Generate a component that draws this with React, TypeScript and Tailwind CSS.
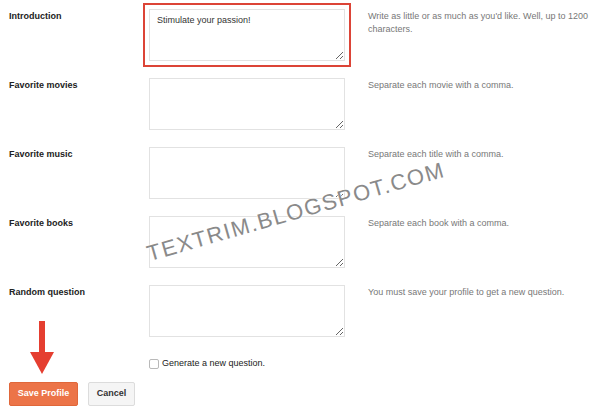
import React from "react";

const rows = [
  { label: "Introduction", help: "Write as little or as much as you'd like. Well, up to 1200 characters.", value: "Stimulate your passion!", highlight: true },
  { label: "Favorite movies", help: "Separate each movie with a comma." },
  { label: "Favorite music", help: "Separate each title with a comma." },
  { label: "Favorite books", help: "Separate each book with a comma." },
  { label: "Random question", help: "You must save your profile to get a new question." },
];

export default function App() {
  return (
    <div className="relative h-[417px] w-[600px] overflow-hidden bg-white font-['Liberation_Sans',Arial,sans-serif] text-[9px]">
      <div className="flex flex-col gap-[17px] pl-[9px] pt-[9px]">
        {rows.map((r) => (
          <div key={r.label} className="flex">
            <div className="w-[140px] pt-[1px] font-bold leading-[13px] text-[#222]">{r.label}</div>
            <textarea
              defaultValue={r.value}
              className={
                "h-[52px] w-[196px] resize-y border border-[#e2e2e2] bg-white px-[7px] py-[4px] leading-[13px] text-[#333] " +
                (r.highlight ? "outline-2 outline-offset-[4px] outline-[#dc4437]" : "outline-none")
              }
            />
            <div className="ml-[23px] w-[226px] pt-[1px] leading-[13px] text-[#777]">{r.help}</div>
          </div>
        ))}
      </div>

      <div className="mt-[20px] flex items-center pl-[149px]">
        <span className="h-[10px] w-[10px] rounded-[2px] border border-[#b9b9b9] bg-white" />
        <span className="ml-[3px] leading-[13px] text-[#222]">Generate a new question.</span>
      </div>

      <div className="mt-[12px] flex gap-[10px] pl-[9px]">
        <button className="h-[24px] w-[69px] rounded-[2px] border border-[#e0673a] bg-[#ec7448] font-bold text-white">
          Save Profile
        </button>
        <button className="h-[24px] w-[47px] rounded-[2px] border border-[#dcdcdc] bg-[#f5f5f5] font-bold text-[#333]">
          Cancel
        </button>
      </div>

      <svg className="absolute left-[30px] top-[321px]" width="24" height="53" viewBox="0 0 24 53">
        <rect x="9" y="0" width="6" height="32" fill="#e53e30" />
        <polygon points="0,31 24,31 12,53" fill="#e53e30" />
      </svg>

      <div className="pointer-events-none absolute left-[296px] top-[212px] -translate-x-1/2 -translate-y-1/2 -rotate-[16deg] whitespace-nowrap text-[22px] leading-none tracking-[1.5px] text-[#8a8a8a] [text-shadow:0_0_2px_#fff,0_0_2px_#fff]">
        TEXTRIM.BLOGSPOT.COM
      </div>
    </div>
  );
}
